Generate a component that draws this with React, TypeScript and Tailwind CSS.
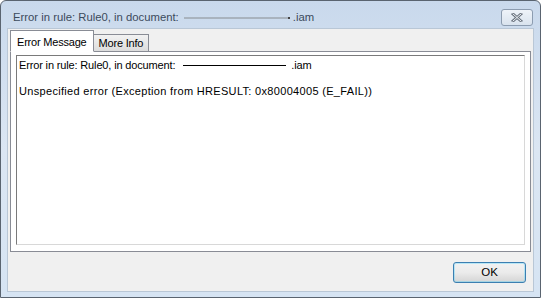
export default function App() {
  return (
    <div className="w-[542px] h-[299px] bg-white overflow-hidden" style={{ fontFamily: '"Segoe UI", "Liberation Sans", Arial, sans-serif' }}>
      <div className="w-[541px] h-[298px] rounded-t-[6px] border border-[#5a6470] bg-gradient-to-b from-[#c9d9ec] via-[#dbe6f3] to-[#d6e4f3] flex flex-col px-[6px] pb-[5px]">
        {/* title bar */}
        <div className="h-[27px] flex items-start shrink-0">
          <div className="pl-[6px] pt-[9px] text-[11.3px] leading-[14px] text-[#3c4a5c] flex items-center">
            <span>Error in rule: Rule0, in document:</span>
            <span className="inline-block w-[106px] h-[2px] bg-[#a9b3be] ml-[5px] mr-[3px] mt-[2px] border-r-2 border-[#444]" />
            <span>.iam</span>
          </div>
          <div className="ml-auto mr-[1px] mt-[8px] w-[32px] h-[17px] rounded-[3px] border border-[#8c9cb0] bg-gradient-to-b from-[#eef3f9] to-[#d9e3ee] flex items-center justify-center">
            <svg width="12" height="9" viewBox="0 0 12 9">
              <path d="M2 1 L10 8 M10 1 L2 8" stroke="#6b7480" strokeWidth="2.8" strokeLinecap="square" />
              <path d="M2 1 L10 8 M10 1 L2 8" stroke="#eef2f6" strokeWidth="1" strokeLinecap="square" />
            </svg>
          </div>
        </div>
        {/* client area */}
        <div className="flex-1 bg-[#f0f0f0] border border-[#b9c7d6] flex flex-col px-[2px] pt-[1px]" style={{ fontFamily: '"Liberation Sans", Arial, sans-serif' }}>
          {/* tabs */}
          <div className="flex items-end h-[21px] shrink-0 relative z-10">
            <div className="h-[22px] px-[6px] pt-[3px] bg-white border border-[#898c95] border-b-white text-[11px] tracking-[-0.2px] text-black mb-[-1px]">
              Error Message
            </div>
            <div className="h-[17px] px-[5px] bg-gradient-to-b from-[#f2f2f2] to-[#dcdcdc] border border-l-0 border-[#898c95] border-b-0 text-[11px] tracking-[-0.2px] text-black leading-[17px]">
              More Info
            </div>
          </div>
          {/* tab page */}
          <div className="h-[201px] border border-[#898c95] bg-white pt-[3px] px-[5px] pb-[6px] shrink-0">
            <div className="h-full border border-[#7a7a7a] border-r-[#d8d8d8] border-b-[#d8d8d8] px-[2px] pt-[3px] text-[11px] text-black">
              <div className="flex items-center h-[13px] tracking-[-0.15px]">
                <span>Error in rule: Rule0, in document:</span>
                <span className="inline-block w-[103px] h-[1px] bg-black ml-[8px] mr-[5px]" />
                <span>.iam</span>
              </div>
              <div className="mt-[11px] h-[13px] tracking-[0.32px]">Unspecified error (Exception from HRESULT: 0x80004005 (E_FAIL))</div>
            </div>
          </div>
          {/* buttons */}
          <div className="flex-1 flex justify-end items-start pt-[10px] pr-[5px]">
            <button className="w-[73px] h-[21px] rounded-[3px] border border-[#3c7fb1] bg-gradient-to-b from-[#f2f2f2] via-[#ebebeb] to-[#d5d5d5] shadow-[inset_0_0_0_1px_#48d2ff55] text-[11.5px] text-black">
              OK
            </button>
          </div>
        </div>
      </div>
    </div>
  );
}
